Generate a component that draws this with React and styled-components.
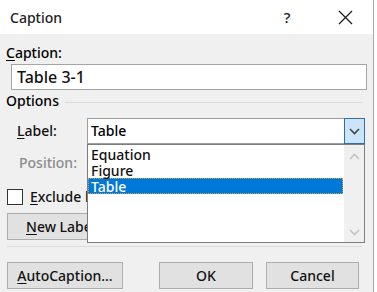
import React from 'react';
import styled, {createGlobalStyle} from 'styled-components';

const GlobalStyle = createGlobalStyle`
  html, body {
    margin: 0;
    padding: 0;
    background: #ffffff;
  }
  body {
    font-family: "Noto Sans", "Open Sans", sans-serif;
    font-size: 14px;
    font-weight: 500;
    color: #000;
  }
`;

const Chevron = ({up, color = '#444'}) => (
    <svg width="11" height="7" viewBox="0 0 11 7">
        <path d={up ? 'M1 6 L5.5 1.5 L10 6' : 'M1 1 L5.5 5.5 L10 1'}
              fill="none" stroke={color} strokeWidth="1.6"/>
    </svg>
);

const CloseIcon = () => (
    <svg width="15" height="15" viewBox="0 0 15 15">
        <path d="M1 1 L14 14 M14 1 L1 14" stroke="#1f1f1f" strokeWidth="1.3"/>
    </svg>
);

const items = ['Equation', 'Figure', 'Table'];

const App = () => {
    return (
        <>
            <GlobalStyle/>
            <Dialog>
                <TitleBar>
                    <Title>Caption</Title>
                    <Help>?</Help>
                    <CloseBox><CloseIcon/></CloseBox>
                </TitleBar>
                <Body>
                    <FieldLabel><u>C</u>aption:</FieldLabel>
                    <TextBox>Table 3-1</TextBox>
                    <GroupRow>
                        <span>Options</span>
                        <GroupLine/>
                    </GroupRow>
                    <OptionRow>
                        <OptionLabel><u>L</u>abel:</OptionLabel>
                        <Combo>
                            <ComboValue>Table</ComboValue>
                            <ComboButton><Chevron/></ComboButton>
                            <ListBox>
                                <Items>
                                    {items.map((item) => (
                                        <Item key={item} selected={item === 'Table'}>{item}</Item>
                                    ))}
                                </Items>
                                <ScrollBar>
                                    <ScrollArrow><Chevron up color="#c2c2c2"/></ScrollArrow>
                                    <ScrollArrow><Chevron color="#c2c2c2"/></ScrollArrow>
                                </ScrollBar>
                            </ListBox>
                        </Combo>
                    </OptionRow>
                    <OptionRow $tall={false}>
                        <OptionLabel $disabled>Position:</OptionLabel>
                    </OptionRow>
                    <CheckRow>
                        <CheckBox/>
                        <CheckText><u>E</u>xclude label from caption</CheckText>
                    </CheckRow>
                    <Button $width={150} $left>
                        <Clip $max={61}><u>N</u>ew Label...</Clip>
                    </Button>
                    <Separator/>
                    <Footer>
                        <Button $width={116}><u>A</u>utoCaption...</Button>
                        <Spacer/>
                        <Button $width={94}>OK</Button>
                        <Button $width={93}>Cancel</Button>
                    </Footer>
                </Body>
            </Dialog>
        </>
    );
};

const Dialog = styled.div`
  width: 373px;
  height: 292px;
  border-right: 1px solid #a9a9a9;
  display: flex;
  flex-direction: column;
  overflow: hidden;
`;

const TitleBar = styled.div`
  height: 34px;
  background: #fff;
  display: flex;
  align-items: center;
  padding-left: 10px;
`;

const Title = styled.div`
  flex: 1;
  font-size: 14px;
  color: #222;
`;

const Help = styled.div`
  width: 14px;
  font-size: 15px;
  color: #222;
  margin-right: 44px;
  text-align: center;
`;

const CloseBox = styled.div`
  display: flex;
  margin-right: 20px;
  margin-top: 1px;
`;

const Body = styled.div`
  flex: 1;
  background: #f0f0f0;
  padding: 10px 6px 0 6px;
  display: flex;
  flex-direction: column;

  u {
    text-decoration-thickness: 1px;
    text-underline-offset: 2px;
  }
`;

const FieldLabel = styled.div`
  line-height: 18px;
  height: 18px;
`;

const TextBox = styled.div`
  margin: 2px 0 0 5px;
  width: 356px;
  height: 26px;
  box-sizing: border-box;
  border: 1px solid #a5a5a5;
  background: #fff;
  font-size: 16px;
  line-height: 24px;
  padding-left: 5px;
  color: #111;
`;

const GroupRow = styled.div`
  margin-top: 2px;
  height: 18px;
  line-height: 18px;
  display: flex;
  align-items: center;
  gap: 6px;
  padding-right: 5px;
`;

const GroupLine = styled.div`
  flex: 1;
  height: 1px;
  background: #dadada;
  margin-top: 2px;
`;

const OptionRow = styled.div`
  display: flex;
  align-items: center;
  margin-top: ${p => (p.$tall === false ? '10px' : '8px')};
  height: ${p => (p.$tall === false ? '18px' : '26px')};
  padding-left: 11px;
`;

const OptionLabel = styled.div`
  width: 70px;
  line-height: 18px;
  color: ${p => (p.$disabled ? '#8b8b8b' : '#111')};
  padding-left: ${p => (p.$disabled ? '2px' : '0')};
`;

const Combo = styled.div`
  position: relative;
  width: 278px;
  height: 26px;
  box-sizing: border-box;
  border: 1px solid #9e9e9e;
  background: #fff;
  display: flex;
  align-items: center;
`;

const ComboValue = styled.div`
  flex: 1;
  padding-left: 3px;
  line-height: 24px;
`;

const ComboButton = styled.div`
  width: 21px;
  height: 26px;
  margin: -1px -1px -1px 0;
  box-sizing: border-box;
  background: #cce4f7;
  border: 1px solid #2f6ea8;
  display: flex;
  align-items: center;
  justify-content: center;
`;

const ListBox = styled.div`
  position: absolute;
  top: 25px;
  left: -1px;
  width: 278px;
  height: 99px;
  box-sizing: border-box;
  border: 1px solid #7d7d7d;
  background: #fff;
  display: flex;
  z-index: 2;
`;

const Items = styled.div`
  flex: 1;
  padding-top: 1px;
`;

const Item = styled.div`
  height: 16px;
  line-height: 15px;
  padding-left: 2px;
  box-sizing: border-box;
  background: ${p => (p.selected ? '#0078d7' : 'transparent')};
  color: ${p => (p.selected ? '#fff' : '#111')};
  border: 1px dotted ${p => (p.selected ? '#c9a25a' : 'transparent')};
  margin-right: 1px;
`;

const ScrollBar = styled.div`
  width: 20px;
  background: #f0f0f0;
  display: flex;
  flex-direction: column;
  justify-content: space-between;
  align-items: center;
  padding: 8px 0 6px;
`;

const ScrollArrow = styled.div`
  display: flex;
`;

const CheckRow = styled.div`
  margin-top: 16px;
  display: flex;
  align-items: center;
  gap: 7px;
  padding-left: 1px;
`;

const CheckBox = styled.div`
  width: 16px;
  height: 16px;
  box-sizing: border-box;
  border: 1px solid #333;
  background: #fff;
`;

const CheckText = styled.div`
  line-height: 18px;
  white-space: nowrap;
  color: #111;
  max-width: 57px;
  overflow: hidden;
`;

const Clip = styled.span`
  display: block;
  max-width: ${p => p.$max}px;
  overflow: hidden;
  white-space: nowrap;
`;

const Button = styled.div`
  width: ${p => p.$width}px;
  height: 27px;
  box-sizing: border-box;
  border: 1px solid #adadad;
  background: #e1e1e1;
  display: flex;
  align-items: center;
  justify-content: ${p => (p.$left ? 'flex-start' : 'center')};
  padding-left: ${p => (p.$left ? '18px' : '0')};
  margin-left: 1px;
  margin-top: ${p => (p.$left ? '7px' : '0')};
  color: #111;
  white-space: nowrap;
`;

const Separator = styled.div`
  margin: 6px 5px 0 1px;
  height: 1px;
  background: #dcdcdc;
`;

const Footer = styled.div`
  margin-top: 15px;
  display: flex;
  gap: 12px;
  padding-right: 8px;
`;

const Spacer = styled.div`
  flex: 1;
`;

export default App;
